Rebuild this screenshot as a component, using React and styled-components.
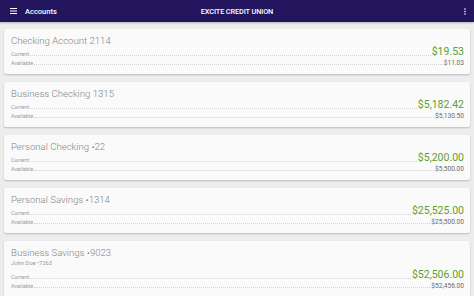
import React from "react";
import styled, { createGlobalStyle } from "styled-components";

const GlobalStyle = createGlobalStyle`
    html, body {
        margin: 0;
        padding: 0;
        background: #ededed;
        font-family: Roboto, "Liberation Sans", sans-serif;
    }
`;

const Page = styled.div`
    width: 474px;
    height: 296px;
    overflow: hidden;
    background: #ededed;
`;

const Header = styled.div`
    height: 22px;
    background: #23145e;
    display: flex;
    align-items: center;
    padding: 0 8px 0 10px;
    color: #fff;
    font-size: 7.5px;
    font-weight: 500;
    box-shadow: 0 1px 2px rgba(0, 0, 0, 0.25);
    position: relative;
`;

const Title = styled.div`
    margin-left: 8px;
    flex: 1;
`;

const Brand = styled.div`
    position: absolute;
    left: 0;
    right: 0;
    text-align: center;
    font-size: 7.3px;
    letter-spacing: -0.1px;
    pointer-events: none;
`;

const List = styled.div`
    display: flex;
    flex-direction: column;
    gap: 8px;
    padding: 7px 4px 0 4px;
`;

const Card = styled.div`
    background: #fafafa;
    border-radius: 2px;
    box-shadow: 0 1px 2px rgba(0, 0, 0, 0.22);
    padding: 6px 6px 7px 7px;
`;

const Name = styled.div`
    font-size: 9.6px;
    font-weight: 300;
    line-height: 12px;
    color: #858585;
`;

const Owner = styled.div`
    font-size: 5.8px;
    line-height: 8px;
    color: #999;
    margin-bottom: 3px;
`;

const Row = styled.div`
    display: flex;
    align-items: flex-end;
    height: ${p => (p.$big ? "11px" : "9px")};
`;

const Label = styled.span`
    font-size: 5.5px;
    line-height: 7px;
    color: #9a9a9a;
`;

const Leader = styled.span`
    flex: 1;
    border-bottom: 1px dotted #d2d2d2;
    margin: 0 1px 2px 1px;
`;

const Value = styled.span`
    font-size: ${p => (p.$big ? "10.5px" : "6.6px")};
    line-height: ${p => (p.$big ? "12px" : "8px")};
    color: ${p => (p.$big ? "#5c9f33" : "#6a6a6a")};
`;

const MenuIcon = () => (
    <svg width="7" height="6" viewBox="0 0 7 6">
        <rect y="0" width="7" height="1" fill="#fff" />
        <rect y="2.5" width="7" height="1" fill="#fff" />
        <rect y="5" width="7" height="1" fill="#fff" />
    </svg>
);

const MoreIcon = () => (
    <svg width="2" height="7" viewBox="0 0 2 7">
        <circle cx="1" cy="1" r="0.8" fill="#fff" />
        <circle cx="1" cy="3.5" r="0.8" fill="#fff" />
        <circle cx="1" cy="6" r="0.8" fill="#fff" />
    </svg>
);

const accounts = [
    { name: "Checking Account 2114", current: "$19.53", available: "$11.03" },
    { name: "Business Checking 1315", current: "$5,182.42", available: "$5,130.50" },
    { name: "Personal Checking •22", current: "$5,200.00", available: "$5,500.00" },
    { name: "Personal Savings •1314", current: "$25,525.00", available: "$25,500.00" },
    { name: "Business Savings •9023", owner: "John Doe •7263", current: "$52,506.00", available: "$52,456.00" },
];

const App = () => (
    <Page>
        <GlobalStyle />
        <Header>
            <MenuIcon />
            <Title>Accounts</Title>
            <Brand>EXCITE CREDIT UNION</Brand>
            <MoreIcon />
        </Header>
        <List>
            {accounts.map(acc => (
                <Card key={acc.name}>
                    <Name>{acc.name}</Name>
                    {acc.owner && <Owner>{acc.owner}</Owner>}
                    <Row $big>
                        <Label>Current</Label>
                        <Leader />
                        <Value $big>{acc.current}</Value>
                    </Row>
                    <Row>
                        <Label>Available</Label>
                        <Leader />
                        <Value>{acc.available}</Value>
                    </Row>
                </Card>
            ))}
        </List>
    </Page>
);

export default App;
